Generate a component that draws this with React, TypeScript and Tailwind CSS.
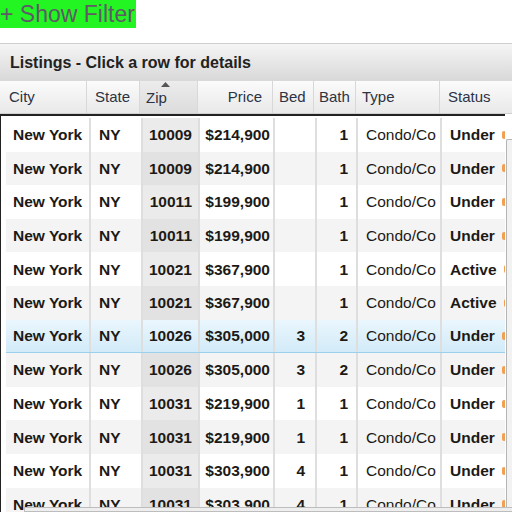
import React from 'react';

type Row = {
  zip: string;
  price: string;
  bed: string;
  bath: string;
  status: string;
};

const ROWS: Row[] = [
  { zip: '10009', price: '$214,900', bed: '', bath: '1', status: 'Under' },
  { zip: '10009', price: '$214,900', bed: '', bath: '1', status: 'Under' },
  { zip: '10011', price: '$199,900', bed: '', bath: '1', status: 'Under' },
  { zip: '10011', price: '$199,900', bed: '', bath: '1', status: 'Under' },
  { zip: '10021', price: '$367,900', bed: '', bath: '1', status: 'Active' },
  { zip: '10021', price: '$367,900', bed: '', bath: '1', status: 'Active' },
  { zip: '10026', price: '$305,000', bed: '3', bath: '2', status: 'Under' },
  { zip: '10026', price: '$305,000', bed: '3', bath: '2', status: 'Under' },
  { zip: '10031', price: '$219,900', bed: '1', bath: '1', status: 'Under' },
  { zip: '10031', price: '$219,900', bed: '1', bath: '1', status: 'Under' },
  { zip: '10031', price: '$303,900', bed: '4', bath: '1', status: 'Under' },
  { zip: '10031', price: '$303,900', bed: '4', bath: '1', status: 'Under' },
];

const SELECTED = 6;

export default function App() {
  return (
    <div className="w-[512px] h-[512px] overflow-hidden bg-white font-['Liberation_Sans',Arial,sans-serif]">
      <div className="inline-block bg-[#22f522] text-[#5f5a66] text-[23px] leading-[28px] pr-[1px]">
        + Show Filter
      </div>

      <div className="mt-[14px] border-t border-[#cfcfcf]">
        <div className="h-[37px] flex items-center pl-[10px] bg-gradient-to-b from-[#f5f5f5] to-[#d8d8d8] text-[16px] font-bold text-[#222]">
          Listings - Click a row for details
        </div>

        <div className="flex h-[33px] bg-gradient-to-b from-[#fbfbfb] to-[#e9e9e9] text-[15px] text-[#2c3344] border-b border-[#d0d0d0]">
          <div className="w-[87px] flex items-center pl-[9px] border-r border-[#d8d8d8]">City</div>
          <div className="w-[53px] flex items-center pl-[8px] border-r border-[#d8d8d8]">State</div>
          <div className="w-[58px] relative flex items-center pl-[6px] bg-gradient-to-b from-[#ececec] to-[#dcdcdc] border-r border-[#d8d8d8]">
            <svg className="absolute left-[21px] top-[1px]" width="9" height="5" viewBox="0 0 9 5">
              <path d="M0 5 L4.5 0 L9 5 Z" fill="#555" />
            </svg>
            <span className="mt-[3px]">Zip</span>
          </div>
          <div className="w-[75px] flex items-center justify-end pr-[10px] border-r border-[#d8d8d8]">Price</div>
          <div className="w-[41px] flex items-center pl-[6px] border-r border-[#d8d8d8]">Bed</div>
          <div className="w-[42px] flex items-center pl-[5px] border-r border-[#d8d8d8]">Bath</div>
          <div className="w-[84px] flex items-center pl-[6px] border-r border-[#d8d8d8]">Type</div>
          <div className="flex-1 flex items-center pl-[8px]">Status</div>
        </div>

        <div className="relative border-l border-t-2 border-[#222] mr-[7px] pt-[2px] pl-[5px]">
          {ROWS.map((r, i) => {
            const sel = i === SELECTED;
            const rowBg = sel
              ? 'bg-gradient-to-b from-[#eaf6fd] to-[#d2ebf8] border-b border-[#9cd1ee]'
              : i % 2 === 1
                ? 'bg-[#f4f4f4]'
                : 'bg-white';
            const zipBg = sel ? '' : i % 2 === 1 ? 'bg-[#e2e2e2]' : 'bg-[#ebebeb]';
            return (
              <div key={i} className={`flex h-[33.6px] text-[15.5px] text-[#1d1a16] ${rowBg}`}>
                <div className="w-[85px] flex items-center pl-[7px] font-bold border-r-2 border-[#dedede] overflow-hidden whitespace-nowrap">New York</div>
                <div className="w-[52px] flex items-center pl-[8px] font-bold border-r-2 border-[#dedede]">NY</div>
                <div className={`w-[57px] flex items-center justify-end pr-[6px] font-bold border-r-2 border-[#dedede] ${zipBg}`}>{r.zip}</div>
                <div className="w-[75px] flex items-center justify-end pr-[3px] font-bold border-r-2 border-[#dedede] overflow-hidden whitespace-nowrap">{r.price}</div>
                <div className="w-[42px] flex items-center justify-end pr-[10px] font-bold border-r-2 border-[#dedede]">{r.bed}</div>
                <div className="w-[41px] flex items-center justify-end pr-[8px] font-bold border-r-2 border-[#dedede]">{r.bath}</div>
                <div className="w-[84px] flex items-center pl-[8px] border-r-2 border-[#dedede] overflow-hidden whitespace-nowrap">Condo/Co</div>
                <div className="flex-1 flex items-center pl-[8px] font-bold whitespace-nowrap overflow-hidden">
                  {r.status}
                  <span className="ml-[7px] inline-block shrink-0 w-[4px] h-[8px] rounded-full bg-[#f0a050]" />
                </div>
              </div>
            );
          })}
        </div>
      </div>

      <div className="fixed right-0 top-[139px] w-[6px] h-[380px] border-l border-t border-[#b5b5b5] bg-[#f2f2f2] rounded-tl-[2px]" />
      <div className="fixed left-[24px] bottom-0 w-[490px] h-[5px] border border-[#bdbdbd] bg-[#eeeeee]" />
    </div>
  );
}
